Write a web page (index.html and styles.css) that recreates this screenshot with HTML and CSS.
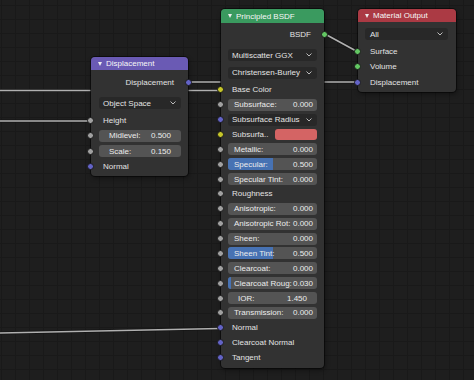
FILE: index.html
```html
<!DOCTYPE html>
<html lang="en">

<head>
    <meta charset="UTF-8">
    <meta name="viewport" content="width=device-width, initial-scale=1.0">
    <title>Shader nodes</title>
    <link rel="stylesheet" href="styles.css">
</head>

<body>

    <div class="editor">
        <svg class="wires" width="474" height="380" viewBox="0 0 474 380">
            <g class="wire-shade">
                <path d="M0 90.5 H220"/>
                <path d="M0 121 H90"/>
                <path d="M188 82 H358"/>
                <path d="M325 34 L358 52"/>
                <path d="M0 333 L220 328.5"/>
            </g>
            <g class="wire">
                <path d="M0 90.5 H220"/>
                <path d="M0 121 H90"/>
                <path d="M188 82 H358"/>
                <path d="M325 34 L358 52"/>
                <path d="M0 333 L220 328.5"/>
            </g>
        </svg>

        <!-- Displacement -->
        <div class="node node-disp">
            <div class="head head-vector"><span class="tri"></span>Displacement</div>
            <div class="body">
                <div class="row row-out"><span>Displacement</span><i class="sock sock-vector"></i></div>
                <div class="drop drop-space"><span>Object Space</span><svg class="chev" width="6" height="4" viewBox="0 0 6 4"><polyline points="0.5,0.5 3,3 5.5,0.5"/></svg></div>
                <div class="row row-in row-first"><i class="sock sock-value"></i><span class="lbl">Height</span></div>
                <div class="row row-in"><i class="sock sock-value"></i>
                    <div class="field field-num"><span>Midlevel:</span><span>0.500</span></div>
                </div>
                <div class="row row-in"><i class="sock sock-value"></i>
                    <div class="field field-num"><span>Scale:</span><span>0.150</span></div>
                </div>
                <div class="row row-in"><i class="sock sock-vector"></i><span class="lbl">Normal</span></div>
            </div>
        </div>

        <!-- Principled BSDF -->
        <div class="node node-bsdf">
            <div class="head head-shader"><span class="tri"></span>Principled BSDF</div>
            <div class="body">
                <div class="row row-out"><span>BSDF</span><i class="sock sock-shader"></i></div>
                <div class="drop drop-dist"><span>Multiscatter GGX</span><svg class="chev" width="6" height="4" viewBox="0 0 6 4"><polyline points="0.5,0.5 3,3 5.5,0.5"/></svg></div>
                <div class="drop drop-sss"><span>Christensen-Burley</span><svg class="chev" width="6" height="4" viewBox="0 0 6 4"><polyline points="0.5,0.5 3,3 5.5,0.5"/></svg></div>
                <div class="row row-in row-first"><i class="sock sock-color"></i><span class="lbl">Base Color</span></div>
                <div class="row row-in"><i class="sock sock-value"></i>
                    <div class="field"><span>Subsurface:</span><span>0.000</span></div>
                </div>
                <div class="row row-in"><i class="sock sock-vector"></i>
                    <div class="drop drop-row"><span>Subsurface Radius</span><svg class="chev" width="6" height="4" viewBox="0 0 6 4"><polyline points="0.5,0.5 3,3 5.5,0.5"/></svg></div>
                </div>
                <div class="row row-in"><i class="sock sock-color"></i><span class="lbl lbl-grow">Subsurfa..</span><span class="swatch"></span></div>
                <div class="row row-in"><i class="sock sock-value"></i>
                    <div class="field"><span>Metallic:</span><span>0.000</span></div>
                </div>
                <div class="row row-in"><i class="sock sock-value"></i>
                    <div class="field"><span class="fill" style="width: 50%"></span><span>Specular:</span><span>0.500</span></div>
                </div>
                <div class="row row-in"><i class="sock sock-value"></i>
                    <div class="field"><span>Specular Tint:</span><span>0.000</span></div>
                </div>
                <div class="row row-in"><i class="sock sock-value"></i><span class="lbl">Roughness</span></div>
                <div class="row row-in"><i class="sock sock-value"></i>
                    <div class="field"><span>Anisotropic:</span><span>0.000</span></div>
                </div>
                <div class="row row-in"><i class="sock sock-value"></i>
                    <div class="field"><span>Anisotropic Rot:</span><span>0.000</span></div>
                </div>
                <div class="row row-in"><i class="sock sock-value"></i>
                    <div class="field"><span>Sheen:</span><span>0.000</span></div>
                </div>
                <div class="row row-in"><i class="sock sock-value"></i>
                    <div class="field"><span class="fill" style="width: 50%"></span><span>Sheen Tint:</span><span>0.500</span></div>
                </div>
                <div class="row row-in"><i class="sock sock-value"></i>
                    <div class="field"><span>Clearcoat:</span><span>0.000</span></div>
                </div>
                <div class="row row-in"><i class="sock sock-value"></i>
                    <div class="field"><span class="fill" style="width: 3%"></span><span>Clearcoat Roug:</span><span>0.030</span></div>
                </div>
                <div class="row row-in"><i class="sock sock-value"></i>
                    <div class="field field-num"><span>IOR:</span><span>1.450</span></div>
                </div>
                <div class="row row-in"><i class="sock sock-value"></i>
                    <div class="field"><span>Transmission:</span><span>0.000</span></div>
                </div>
                <div class="row row-in"><i class="sock sock-vector"></i><span class="lbl">Normal</span></div>
                <div class="row row-in"><i class="sock sock-vector"></i><span class="lbl">Clearcoat Normal</span></div>
                <div class="row row-in"><i class="sock sock-vector"></i><span class="lbl">Tangent</span></div>
            </div>
        </div>

        <!-- Material Output -->
        <div class="node node-out">
            <div class="head head-output"><span class="tri"></span>Material Output</div>
            <div class="body">
                <div class="drop drop-target"><span>All</span><svg class="chev" width="6" height="4" viewBox="0 0 6 4"><polyline points="0.5,0.5 3,3 5.5,0.5"/></svg></div>
                <div class="row row-in row-first"><i class="sock sock-shader"></i><span class="lbl">Surface</span></div>
                <div class="row row-in"><i class="sock sock-shader"></i><span class="lbl">Volume</span></div>
                <div class="row row-in"><i class="sock sock-vector"></i><span class="lbl">Displacement</span></div>
            </div>
        </div>
    </div>

</body>

</html>
```

FILE: styles.css
```css
* {
    box-sizing: border-box;
}

body {
    margin: 0;
    background: #1d1d1d;
    font-family: "Liberation Sans", Arial, sans-serif;
    font-size: 8px;
    color: #e2e2e2;
}

.editor {
    position: relative;
    width: 474px;
    height: 380px;
    overflow: hidden;
    background-color: #1e1e1e;
    background-image:
        linear-gradient(to right, #191919 1px, transparent 1px),
        linear-gradient(to bottom, #191919 1px, transparent 1px);
    background-size: 14px 14px;
    background-position: 1px 5px;
}

.wires {
    position: absolute;
    left: 0;
    top: 0;
}

.wires path {
    fill: none;
}

.wire-shade path {
    stroke: #151515;
    stroke-width: 3.2;
}

.wire path {
    stroke: #b0b0b0;
    stroke-width: 1.6;
}

/* nodes */

.node {
    position: absolute;
    background: #323232;
    border-radius: 4px;
    box-shadow: 0 0 0 1px rgba(0, 0, 0, 0.5), 1px 2px 5px rgba(0, 0, 0, 0.45);
}

.node-disp {
    left: 91px;
    top: 57px;
    width: 97px;
    height: 119px;
}

.node-bsdf {
    left: 221px;
    top: 9px;
    width: 103px;
    height: 359px;
}

.node-out {
    left: 358px;
    top: 9px;
    width: 98px;
    height: 83px;
}

.head {
    height: 13px;
    display: flex;
    align-items: center;
    padding-left: 7px;
    border-radius: 4px 4px 0 0;
    color: #f6f6f6;
}

.node-bsdf .head {
    height: 14px;
}

.head-vector {
    background: #6a5ab4;
}

.head-shader {
    background: #3a9a5f;
}

.head-output {
    background: #ab3a44;
}

.tri {
    width: 0;
    height: 0;
    border-left: 2.5px solid transparent;
    border-right: 2.5px solid transparent;
    border-top: 4px solid #ececec;
    margin-right: 4px;
}

.body {
    display: flex;
    flex-direction: column;
}

.row {
    position: relative;
    display: flex;
    align-items: center;
    padding: 0 7px;
}

.node-bsdf .row {
    height: 14.87px;
}

.node-disp .row {
    height: 15.5px;
    padding-left: 8px;
}

.node-out .row {
    height: 15.2px;
}

.row-out {
    justify-content: flex-end;
}

.node-bsdf .row-out {
    margin-top: 3.6px;
    padding-right: 13px;
}

.node-disp .row-out {
    margin-top: 4.5px;
    padding-right: 14px;
}

.lbl {
    padding-left: 4px;
}

.lbl-grow {
    flex: 1;
}

/* sockets */

.sock {
    position: absolute;
    top: 50%;
    width: 7px;
    height: 7px;
    margin-top: -3.5px;
    border-radius: 50%;
    border: 1px solid #1a1a1a;
}

.row-in .sock {
    left: -4.5px;
}

.row-out .sock {
    right: -4px;
}

.sock-value {
    background: #a1a1a1;
}

.sock-vector {
    background: #6363c7;
}

.sock-color {
    background: #c7c729;
}

.sock-shader {
    background: #63c763;
}

/* fields */

.field {
    position: relative;
    flex: 1;
    height: 12px;
    display: flex;
    align-items: center;
    justify-content: space-between;
    padding: 0 4px 0 6px;
    border-radius: 3px;
    background: #545454;
    color: #ececec;
    overflow: hidden;
    white-space: nowrap;
}

.field span {
    position: relative;
}

.field .fill {
    position: absolute;
    left: 0;
    top: 0;
    bottom: 0;
    background: #4772b3;
}

.field-num {
    padding: 0 10px;
}

.swatch {
    width: 42px;
    height: 11px;
    border-radius: 3px;
    background: #d46464;
}

.drop {
    height: 12px;
    display: flex;
    align-items: center;
    justify-content: space-between;
    padding: 0 5px 0 4px;
    border-radius: 3px;
    background: #282828;
    color: #e4e4e4;
    white-space: nowrap;
}

.drop-row {
    flex: 1;
}

.drop-dist {
    margin: 8px 7px 0;
}

.drop-sss {
    margin: 5.5px 7px 0;
}

.node-bsdf .row-first {
    margin-top: 3.6px;
}

.drop-space {
    margin: 7px 7px 0 8px;
    padding-left: 4px;
}

.node-disp .row-first {
    margin-top: 3.5px;
}

.drop-target {
    margin: 6px 8px 0 7px;
    padding-left: 5px;
}

.node-out .row-first {
    margin-top: 4.2px;
}

.node-out .lbl {
    padding-left: 5px;
}

.chev polyline {
    fill: none;
    stroke: #bdbdbd;
    stroke-width: 1;
}
```
